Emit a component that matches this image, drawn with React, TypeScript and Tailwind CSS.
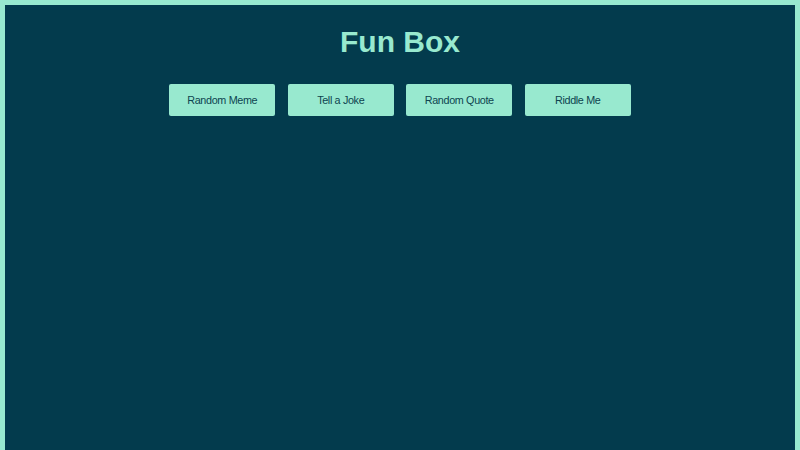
const buttons = ["Random Meme", "Tell a Joke", "Random Quote", "Riddle Me"];

export default function App() {
  return (
    <div
      className="h-[450px] overflow-hidden border-x-[5px] border-t-[5px] border-[#98e9cf] bg-[#033b4d]"
      style={{ fontFamily: '"Liberation Sans", Arial, sans-serif' }}
    >
      <div className="flex flex-col items-center pt-[20px]">
        <h1 className="text-[30px] leading-[34px] font-bold text-[#98e9cf]">
          Fun Box
        </h1>
        <div className="mt-[25px] flex gap-[12.5px]">
          {buttons.map((label) => (
            <button
              key={label}
              className="h-[32px] w-[106px] rounded-[2px] bg-[#98e9cf] text-[10.8px] tracking-[-0.35px] text-[#0d4450]"
            >
              {label}
            </button>
          ))}
        </div>
      </div>
    </div>
  );
}
